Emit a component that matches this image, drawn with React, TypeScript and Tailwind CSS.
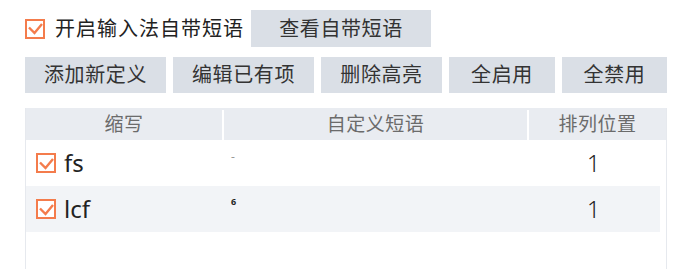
import React from "react";

const Check = ({ className = "" }: { className?: string }) => (
  <span
    className={`flex items-center justify-center w-[20px] h-[20px] border-2 border-[#f47c4c] bg-white shrink-0 ${className}`}
  >
    <svg width="15" height="13" viewBox="0 0 15 13" fill="none">
      <path d="M1 5.5 L6.5 11 L14 2" stroke="#f47c4c" strokeWidth="2.4" strokeLinejoin="miter" />
    </svg>
  </span>
);

const Btn = ({ w, children }: { w: string; children: React.ReactNode }) => (
  <div
    className={`${w} h-[36px] flex items-center justify-center bg-[#dadfe6] text-[#333333] text-[20px] leading-none tracking-[0.6px]`}
  >
    {children}
  </div>
);

export default function App() {
  const rows = [
    { abbr: "fs", phrase: "-", pos: "1", bg: "bg-white", small: "text-[#9a9a9a] font-normal text-[12px]" },
    { abbr: "lcf", phrase: "6", pos: "1", bg: "bg-[#f2f4f7]", small: "text-[#222222] font-bold text-[9px]" },
  ];
  return (
    <div
      className="w-[678px] h-[269px] overflow-hidden bg-white pl-[25px] pt-[10px]"
      style={{ fontFamily: "'Noto Sans', 'Noto Sans CJK SC', sans-serif" }}
    >
      <div className="flex items-center h-[37px]">
        <Check />
        <span className="ml-[10px] text-[20px] leading-none text-[#222222] tracking-[1px]">开启输入法自带短语</span>
        <div className="ml-[7px] w-[180px] h-[37px] flex items-center justify-center bg-[#dadfe6] text-[#333333] text-[20px] leading-none tracking-[0.6px]">
          查看自带短语
        </div>
      </div>
      <div className="flex mt-[10px] gap-[7px]">
        <Btn w="w-[141px]">添加新定义</Btn>
        <Btn w="w-[141px]">编辑已有项</Btn>
        <Btn w="w-[121px]">删除高亮</Btn>
        <Btn w="w-[106px]">全启用</Btn>
        <Btn w="w-[105px]">全禁用</Btn>
      </div>
      <div className="mt-[15px] w-[642px] h-[200px] border-l border-r border-[#e6e9ee]">
        <div className="flex h-[32px] bg-[#e9ecf1] text-[19px] leading-none text-[#6b6b6b] tracking-[0.5px]">
          <div className="w-[196px] flex items-center justify-center">缩写</div>
          <div className="w-[2px] mt-[2px] bg-white" />
          <div className="w-[303px] flex items-center justify-center">自定义短语</div>
          <div className="w-[2px] mt-[2px] bg-white" />
          <div className="flex-1 flex items-center justify-center">排列位置</div>
        </div>
        <div className="w-[634px]">
          {rows.map((r) => (
            <div key={r.abbr} className={`flex h-[46px] ${r.bg}`}>
              <div className="w-[198px] flex items-center pl-[10px]">
                <Check />
                <span className="ml-[8px] text-[24px] leading-none text-[#222222]">{r.abbr}</span>
              </div>
              <div className={`w-[303px] pl-[7px] pt-[11px] leading-none ${r.small}`}>{r.phrase}</div>
              <div className="flex-1 flex items-center justify-center text-[23px] leading-none text-[#222222] font-light">
                {r.pos}
              </div>
            </div>
          ))}
        </div>
      </div>
    </div>
  );
}
